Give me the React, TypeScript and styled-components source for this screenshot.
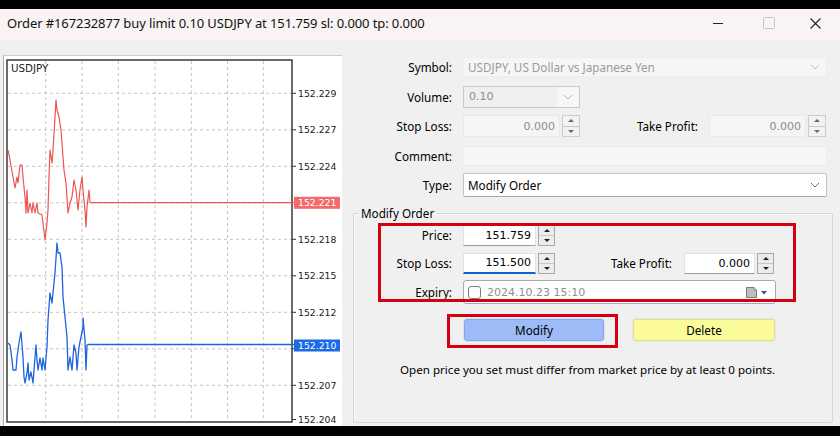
import React from "react";
import styled, { createGlobalStyle, css } from "styled-components";

const GlobalStyle = createGlobalStyle`
  html, body { margin: 0; padding: 0; background: #000; }
  body { width: 840px; height: 436px; overflow: hidden; font-family: "Noto Sans", "Open Sans", sans-serif; }
  * { box-sizing: border-box; }
`;

const Screen = styled.div`
  padding-top: 9px;
  height: 436px;
  background: #000;
`;

const Window = styled.div`
  position: relative;
  width: 840px;
  height: 417px;
  background: #f0f0f0;
  display: flex;
  flex-direction: column;
`;

const TitleBar = styled.div`
  height: 31px;
  background: #f9f3f3;
  display: flex;
  align-items: center;
  padding: 0 19px 3px 7px;
`;

const Title = styled.div`
  flex: 1;
  font-size: 13px;
  letter-spacing: -0.1px;
  color: #111;
  white-space: nowrap;
`;

const WinIcon = styled.svg<{ $gap: number }>`
  display: block;
  margin-left: ${(p) => p.$gap}px;
`;

const Body = styled.div`
  flex: 1;
  display: flex;
  padding-top: 15px;
  min-height: 0;
`;

const ChartPanel = styled.div`
  margin-left: 3px;
  width: 339px;
  height: 371px;
  background: #fff;
  border-top: 1px solid #cbcbcb;
  border-left: 1px solid #a8a8a8;
`;

const ChartSvg = styled.svg`
  display: block;
`;

const FormPanel = styled.div`
  flex: 1;
  display: flex;
  flex-direction: column;
  min-width: 0;
`;

const TopRows = styled.div`
  display: flex;
  flex-direction: column;
  gap: 5.5px;
`;

const Row = styled.div<{ $mt?: number }>`
  height: 24px;
  display: flex;
  align-items: center;
  margin-top: ${(p) => p.$mt ?? 0}px;
`;

const Label = styled.div<{ $w: number; $pr?: number }>`
  width: ${(p) => p.$w}px;
  flex: none;
  text-align: right;
  font-size: 11.7px;
  color: #000;
  padding-right: ${(p) => p.$pr ?? 11}px;
  white-space: nowrap;
`;

const SelectBox = styled.div<{ $w: number; $h: number; $enabled?: boolean }>`
  width: ${(p) => p.$w}px;
  height: ${(p) => p.$h}px;
  display: flex;
  align-items: center;
  padding: 0 6px 0 4px;
  font-size: 11.7px;
  ${(p) =>
    p.$enabled
      ? css`
          background: #fff;
          border: 1px solid #c4c4c4;
          border-bottom-color: #a8a8a8;
          border-radius: 2px;
          color: #000;
        `
      : css`
          background: #f6f6f6;
          border: 1px solid #ededed;
          color: #9a9a9a;
        `}
`;

const VolumeBox = styled.div`
  width: 117px;
  height: 22px;
  display: flex;
  align-items: center;
  border: 1px solid #c9c9c9;
  background: #efefef;
`;

const VolumeText = styled.div`
  flex: 1;
  padding-left: 5px;
  font-family: "DejaVu Sans", sans-serif;
  font-size: 11px;
  color: #8c8c8c;
`;

const VolumeChevron = styled.div`
  width: 22px;
  height: 100%;
  display: flex;
  align-items: center;
  justify-content: center;
  background: #f7f7f7;
`;

const SelectText = styled.div`
  flex: 1;
  white-space: nowrap;
`;

const SpinGroup = styled.div<{ $h: number }>`
  display: flex;
  height: ${(p) => p.$h}px;
  gap: 2px;
`;

const NumInput = styled.div<{ $w: number; $mode: "disabled" | "normal" | "focused" }>`
  width: ${(p) => p.$w}px;
  height: 100%;
  display: flex;
  align-items: center;
  justify-content: flex-end;
  padding-right: 4px;
  font-family: "DejaVu Sans", sans-serif;
  font-size: 11px;
  ${(p) =>
    p.$mode === "disabled"
      ? css`
          background: #f5f5f5;
          border: 1px solid #e9e9e9;
          color: #8c8c8c;
        `
      : css`
          background: #fff;
          border: 1px solid #e2e2e2;
          border-bottom: ${p.$mode === "focused" ? "2px solid #0a63c9" : "1px solid #9c9c9c"};
          color: #000;
        `}
`;

const Spinner = styled.div<{ $w: number; $disabled?: boolean }>`
  width: ${(p) => p.$w}px;
  height: 100%;
  display: flex;
  flex-direction: column;
  border: 1px solid ${(p) => (p.$disabled ? "#cdcdcd" : "#a9a9a9")};
  background: ${(p) => (p.$disabled ? "#f2f2f2" : "#ececec")};
`;

const SpinHalf = styled.div<{ $top?: boolean }>`
  flex: 1;
  display: flex;
  align-items: center;
  justify-content: center;
  ${(p) => p.$top && "border-bottom: 1px solid #c9c9c9;"}
`;

const Arrow = styled.span<{ $up?: boolean; $dim?: boolean }>`
  width: 0;
  height: 0;
  border-left: 3px solid transparent;
  border-right: 3px solid transparent;
  ${(p) =>
    p.$up
      ? `border-bottom: 3px solid ${p.$dim ? "#6a6a6a" : "#222"};`
      : `border-top: 3px solid ${p.$dim ? "#6a6a6a" : "#222"};`}
`;

const Group = styled.fieldset`
  flex: 1;
  min-width: 0;
  margin: 8px 7px 3px 11px;
  padding: 2px 0 0 0;
  border: 1px solid #d6d6d6;
  box-shadow: inset 1px 1px 0 #fafafa;
  border-radius: 2px;
`;

const Legend = styled.legend`
  margin-left: 5px;
  padding: 0 2px;
  font-size: 11.7px;
  line-height: 16px;
  color: #000;
`;

const ExpiryBox = styled.div`
  width: 313px;
  height: 24px;
  display: flex;
  align-items: center;
  background: #fff;
  border: 1px solid #a9a9a9;
  border-radius: 3px;
  padding: 0 7px 0 4px;
`;

const Check = styled.span`
  width: 13px;
  height: 13px;
  border: 1px solid #7d7d7d;
  border-radius: 3px;
  background: #fff;
  flex: none;
`;

const ExpiryText = styled.span`
  margin-left: 6px;
  font-family: "DejaVu Sans", sans-serif;
  font-size: 11px;
  color: #8f8f8f;
  flex: 1;
`;

const ButtonRow = styled.div`
  display: flex;
  margin: 15px 0 0 110px;
  gap: 29px;
`;

const Button = styled.div<{ $kind: "blue" | "yellow" }>`
  height: 22px;
  width: ${(p) => (p.$kind === "blue" ? 140 : 142)}px;
  display: flex;
  align-items: center;
  justify-content: center;
  font-size: 11.7px;
  color: #000;
  border-radius: 3px;
  ${(p) =>
    p.$kind === "blue"
      ? css`
          background: #9dbbf6;
          border: 1px solid #86a6e8;
          box-shadow: 0 0 0 1px #dbe3f0;
        `
      : css`
          background: #fbfb9c;
          border: 1px solid #e0e09a;
          box-shadow: 0 0 0 1px #e6e6da;
        `}
`;

const Info = styled.div`
  margin-top: 21px;
  padding-left: 46px;
  font-size: 11.6px;
  line-height: 16px;
  color: #000;
  white-space: nowrap;
`;

const Annotation = styled.div`
  position: absolute;
  border: 3px solid #d5000f;
  pointer-events: none;
`;

const Chevron = ({ color }: { color: string }) => (
  <svg width="10" height="6" viewBox="0 0 10 6">
    <polyline points="1,1 5,5 9,1" fill="none" stroke={color} strokeWidth="1" />
  </svg>
);

const Spin = ({ disabled }: { disabled?: boolean }) => (
  <Spinner $w={disabled ? 18 : 17} $disabled={disabled}>
    <SpinHalf $top>
      <Arrow $up $dim={disabled} />
    </SpinHalf>
    <SpinHalf>
      <Arrow $dim={disabled} />
    </SpinHalf>
  </Spinner>
);

const redPts =
  "8,150 10,160 13,177 15,188 17,177 18,183 20,165 22,165 23,177 25,197 26,213 27,190 28,213 30,203 32,213 33,203 35,213 37,203 38,213 42,215 43,223 45,240 47,223 48,210 49,177 50,150 52,163 53,150 55,117 56,100 57,110 59,117 61,130 63,157 64,170 66,183 68,213 70,203 72,197 74,180 76,190 78,210 80,190 82,177 83,190 85,210 86,227 87,207 89,190 90,202.7 294,202.7";
const bluePts =
  "8,343 10,345 12,360 13,370 16,370 17,357 19,343 21,332 23,357 24,377 25,383 27,373 28,363 29,380 31,372 33,383 34,370 36,345 37,360 38,370 40,358 42,370 43,358 45,370 47,347 48,320 50,293 52,303 53,293 55,273 57,243 58,253 60,253 62,267 63,297 65,317 67,337 68,370 70,357 72,370 74,345 76,353 77,370 79,347 81,337 83,327 83,318 85,340 86,370 87,345 88,344.5 294,344.5";

const gridX = [45.7, 82, 118.3, 155, 191.3, 227.6, 263.3];
const gridY = [93.3, 129.8, 166.3, 202.8, 239.3, 275.8, 312.3, 348.8, 385.3];
const axisLabels: [number, string][] = [
  [93.3, "152.229"],
  [129.8, "152.227"],
  [166.3, "152.224"],
  [239.3, "152.218"],
  [275.8, "152.215"],
  [312.3, "152.212"],
  [385.3, "152.207"],
  [419.5, "152.204"],
];

const Chart = () => (
  <ChartSvg width="338" height="370" viewBox="4 56 338 370">
    <rect x="4" y="56" width="338" height="370" fill="#fff" />
    {gridX.map((x) => (
      <line key={x} x1={x} y1={61} x2={x} y2={421} stroke="#c4c4c4" strokeWidth="1" strokeDasharray="3 3" />
    ))}
    {gridY.map((y) => (
      <line key={y} x1={8} y1={y} x2={291} y2={y} stroke="#c4c4c4" strokeWidth="1" strokeDasharray="3 3" />
    ))}
    <rect x="7" y="60" width="285" height="362" fill="none" stroke="#2b2b2b" strokeWidth="1.4" />
    {axisLabels.map(([y, t]) => (
      <g key={t}>
        <line x1={292} y1={y} x2={296} y2={y} stroke="#333" strokeWidth="1" />
        <text x={298} y={y + 3.6} fontFamily="DejaVu Sans, sans-serif" fontSize="9.3" fill="#222">
          {t}
        </text>
      </g>
    ))}
    <line x1={292} y1={348.8} x2={296} y2={348.8} stroke="#333" strokeWidth="1" />
    <text x="11" y="72" fontFamily="DejaVu Sans, sans-serif" fontSize="10.3" fill="#222">
      USDJPY
    </text>
    <polyline points={redPts} fill="none" stroke="#ef5454" strokeWidth="1.2" strokeLinejoin="round" />
    <polyline points={bluePts} fill="none" stroke="#1f63de" strokeWidth="1.3" strokeLinejoin="round" />
    <rect x="294" y="196.8" width="46" height="12" fill="#f26a6a" />
    <text x="298" y="206.4" fontFamily="DejaVu Sans, sans-serif" fontSize="9.3" fill="#fff">
      152.221
    </text>
    <rect x="294" y="339.5" width="46" height="12" fill="#196ce6" />
    <text x="298" y="349.1" fontFamily="DejaVu Sans, sans-serif" fontSize="9.3" fill="#fff">
      152.210
    </text>
  </ChartSvg>
);

export default function App() {
  return (
    <>
      <GlobalStyle />
      <Screen>
        <Window>
          <TitleBar>
            <Title>Order #167232877 buy limit 0.10 USDJPY at 151.759 sl: 0.000 tp: 0.000</Title>
            <WinIcon $gap={0} width="10" height="11" viewBox="0 0 10 11">
              <line x1="0" y1="5.5" x2="10" y2="5.5" stroke="#222" strokeWidth="1" />
            </WinIcon>
            <WinIcon $gap={40} width="12" height="12" viewBox="0 0 12 12">
              <rect x="0.5" y="0.5" width="11" height="11" rx="1" fill="none" stroke="#c4c4c4" strokeWidth="1" />
            </WinIcon>
            <WinIcon $gap={35} width="11" height="11" viewBox="0 0 11 11">
              <path d="M0.5 0.5 L10.5 10.5 M10.5 0.5 L0.5 10.5" stroke="#222" strokeWidth="1.1" />
            </WinIcon>
          </TitleBar>
          <Body>
            <ChartPanel>
              <Chart />
            </ChartPanel>
            <FormPanel>
              <TopRows>
                <Row>
                  <Label $w={121}>Symbol:</Label>
                  <SelectBox $w={364} $h={20}>
                    <SelectText>USDJPY, US Dollar vs Japanese Yen</SelectText>
                    <Chevron color="#b9b9b9" />
                  </SelectBox>
                </Row>
                <Row>
                  <Label $w={121}>Volume:</Label>
                  <VolumeBox>
                    <VolumeText>0.10</VolumeText>
                    <VolumeChevron>
                      <Chevron color="#b5b5b5" />
                    </VolumeChevron>
                  </VolumeBox>
                </Row>
                <Row>
                  <Label $w={121}>Stop Loss:</Label>
                  <SpinGroup $h={22}>
                    <NumInput $w={97} $mode="disabled">0.000</NumInput>
                    <Spin disabled />
                  </SpinGroup>
                  <Label $w={129}>Take Profit:</Label>
                  <SpinGroup $h={22}>
                    <NumInput $w={97} $mode="disabled">0.000</NumInput>
                    <Spin disabled />
                  </SpinGroup>
                </Row>
                <Row>
                  <Label $w={121}>Comment:</Label>
                  <SelectBox $w={364} $h={20} />
                </Row>
                <Row>
                  <Label $w={121}>Type:</Label>
                  <SelectBox $w={364} $h={24} $enabled>
                    <SelectText>Modify Order</SelectText>
                    <Chevron color="#6a6a6a" />
                  </SelectBox>
                </Row>
              </TopRows>
              <Group>
                <Legend>Modify Order</Legend>
                <Row>
                  <Label $w={109}>Price:</Label>
                  <SpinGroup $h={21}>
                    <NumInput $w={73} $mode="normal">151.759</NumInput>
                    <Spin />
                  </SpinGroup>
                </Row>
                <Row $mt={4}>
                  <Label $w={109}>Stop Loss:</Label>
                  <SpinGroup $h={21}>
                    <NumInput $w={73} $mode="focused">151.500</NumInput>
                    <Spin />
                  </SpinGroup>
                  <Label $w={129} $pr={12}>Take Profit:</Label>
                  <SpinGroup $h={21}>
                    <NumInput $w={71} $mode="normal">0.000</NumInput>
                    <Spin />
                  </SpinGroup>
                </Row>
                <Row $mt={5}>
                  <Label $w={109}>Expiry:</Label>
                  <ExpiryBox>
                    <Check />
                    <ExpiryText>2024.10.23 15:10</ExpiryText>
                    <svg width="22" height="11" viewBox="0 0 22 11">
                      <path d="M0.5 0.5 H8 L10.5 3 V10.5 H0.5 Z" fill="#bdbdbd" stroke="#7a7a7a" strokeWidth="1" />
                      <path d="M8 0.5 V3 H10.5" fill="#e6e6e6" stroke="#7a7a7a" strokeWidth="0.8" />
                      <path d="M15 4 H21 L18 7.5 Z" fill="#2e4f86" />
                    </svg>
                  </ExpiryBox>
                </Row>
                <ButtonRow>
                  <Button $kind="blue">Modify</Button>
                  <Button $kind="yellow">Delete</Button>
                </ButtonRow>
                <Info>Open price you set must differ from market price by at least 0 points.</Info>
              </Group>
            </FormPanel>
          </Body>
          <Annotation style={{ left: 378, top: 214, width: 418, height: 79 }} />
          <Annotation style={{ left: 447, top: 305, width: 171, height: 34 }} />
        </Window>
      </Screen>
    </>
  );
}
